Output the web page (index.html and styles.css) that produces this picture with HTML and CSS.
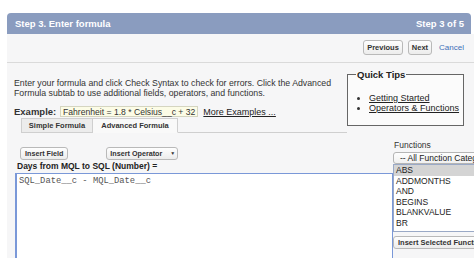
FILE: index.html
```html
<!DOCTYPE html>
<html>
<head>
<meta charset="utf-8">
<link rel="stylesheet" href="styles.css">
</head>
<body>
<div class="page">
  <div class="header">
    <span>Step 3. Enter formula</span>
    <span>Step 3 of 5</span>
  </div>
  <div class="panel">
    <div class="toolbar">
      <button class="btn">Previous</button>
      <button class="btn">Next</button>
      <a class="cancel" href="#">Cancel</a>
    </div>
    <div class="content">
      <div class="intro-row">
        <div class="intro">
          <p class="desc">Enter your formula and click Check Syntax to check for errors. Click the Advanced<br>Formula subtab to use additional fields, operators, and functions.</p>
          <div class="example">
            <span class="ex-label">Example:</span>
            <span class="ex-box">Fahrenheit = 1.8 * Celsius__c + 32</span>
            <a class="more" href="#">More Examples ...</a>
          </div>
          <div class="tabs">
            <span class="tab">Simple Formula</span>
            <span class="tab active">Advanced Formula</span>
            <span class="tab-fill"></span>
          </div>
        </div>
        <fieldset class="tips">
          <legend>Quick Tips</legend>
          <ul>
            <li><a href="#">Getting Started</a></li>
            <li><a href="#">Operators &amp; Functions</a></li>
          </ul>
        </fieldset>
      </div>
      <div class="editor-row">
        <div class="editor">
          <div class="editor-tools">
            <button class="btn">Insert Field</button>
            <button class="btn op">Insert Operator <span class="caret">&#9660;</span></button>
          </div>
          <div class="field-label">Days from MQL to SQL (Number) =</div>
          <div class="textarea">SQL_Date__c - MQL_Date__c</div>
        </div>
        <div class="functions">
          <div class="fn-label">Functions</div>
          <div class="fn-select">-- All Function Categories --</div>
          <ul class="fn-list">
            <li class="sel">ABS</li>
            <li>ADDMONTHS</li>
            <li>AND</li>
            <li>BEGINS</li>
            <li>BLANKVALUE</li>
            <li>BR</li>
          </ul>
          <button class="btn fn-btn">Insert Selected Function</button>
        </div>
      </div>
    </div>
  </div>
</div>
</body>
</html>
```
FILE: styles.css
```css
html, body {
  margin: 0;
  padding: 0;
  background: #fff;
  width: 474px;
  height: 258px;
  overflow: hidden;
  font-family: "Liberation Sans", Arial, sans-serif;
  color: #333;
}
.page {
  padding: 13px 0 0 7px;
}
.header {
  width: 464px;
  height: 21px;
  box-sizing: border-box;
  background: #8a9cbf;
  border-radius: 4px 4px 0 0;
  display: flex;
  justify-content: space-between;
  align-items: center;
  padding: 0 7px 0 8px;
  color: #fff;
  font-weight: bold;
  font-size: 9.5px;
}
.panel {
  width: 467px;
  background: #f6f6f7;
  height: 240px;
}
.toolbar {
  height: 29px;
  box-sizing: border-box;
  border-bottom: 1px solid #dadada;
  display: flex;
  align-items: center;
  justify-content: flex-end;
  padding: 0 10px 1px 0;
}
.btn {
  font-family: "Liberation Sans", Arial, sans-serif;
  font-weight: bold;
  font-size: 7.5px;
  color: #333;
  height: 15px;
  padding: 0 3px;
  border: 1px solid #b9b9b9;
  border-radius: 3px;
  background: linear-gradient(#fefefe, #ececec);
  line-height: 13px;
  margin: 0;
  white-space: nowrap;
}
.toolbar .btn + .btn {
  margin-left: 5px;
}
.cancel {
  margin-left: 7px;
  font-size: 8px;
  color: #3d6fb8;
  text-decoration: none;
}
.content {
  padding-left: 7px;
}
.intro-row {
  display: flex;
  align-items: flex-start;
}
.intro {
  width: 333px;
  padding-top: 15px;
}
.desc {
  margin: 0;
  font-size: 8.75px;
  line-height: 10px;
  color: #333;
  white-space: nowrap;
}
.example {
  display: flex;
  align-items: center;
  margin-top: 8px;
  height: 11px;
  white-space: nowrap;
}
.ex-label {
  font-weight: bold;
  font-size: 9.5px;
  width: 46px;
}
.ex-box {
  font-size: 8.6px;
  background: #fcfce6;
  border: 1px solid #d5d5c0;
  height: 11px;
  line-height: 10px;
  padding: 0 2px;
  box-sizing: border-box;
  margin-right: 5px;
}
.more {
  font-size: 9px;
  color: #222;
  text-decoration: underline;
}
.tabs {
  display: flex;
  margin-top: 1px;
  height: 15px;
  margin-left: 7px;
}
.tab {
  font-weight: bold;
  font-size: 7.5px;
  line-height: 13px;
  padding: 0 6px;
  border: 1px solid #cfcfcf;
  background: #ececec;
  color: #333;
  text-align: center;
}
.tab:first-child {
  width: 58px;
}
.tab.active {
  background: #f9f9f9;
  border-left: none;
  border-bottom-color: #f9f9f9;
  width: 72px;
}
.tab-fill {
  flex: 1;
  border-bottom: 1px solid #cfcfcf;
}
.tips {
  margin: 6px 0 0 0;
  padding: 4px 0 0 6px;
  width: 117px;
  height: 57px;
  box-sizing: border-box;
  border: 1px solid #666;
  background: #fbfbfb;
}
.tips legend {
  font-weight: bold;
  font-size: 9.5px;
  padding: 0 1px;
  margin-left: 2px;
  color: #222;
}
.tips ul {
  margin: 9px 0 0 0;
  padding-left: 15px;
  font-size: 9px;
  line-height: 10px;
}
.tips li {
  list-style: disc;
}
.tips a {
  color: #222;
  text-decoration: underline;
}
.editor-row {
  display: flex;
  align-items: flex-start;
}
.editor {
  width: 379px;
}
.editor-tools {
  display: flex;
  padding: 14px 0 0 6px;
}
.editor-tools .btn {
  height: 13px;
  line-height: 11px;
  font-size: 7.2px;
  padding: 0 4px;
}
.editor-tools .op {
  margin-left: 38px;
  width: 72px;
  padding: 0 3px;
}
.caret {
  font-size: 5px;
  margin-left: 6px;
  vertical-align: 1px;
}
.field-label {
  font-weight: bold;
  font-size: 8.5px;
  margin: 1px 0 0 3px;
  line-height: 10px;
  color: #222;
}
.textarea {
  margin: 2px 0 0 1px;
  width: 378px;
  height: 100px;
  box-sizing: border-box;
  border: 1px solid #7a98d8;
  border-left-width: 2px;
  background: #fff;
  font-family: "Liberation Mono", "Courier New", monospace;
  font-size: 8.8px;
  color: #555;
  padding: 2px 2px;
  line-height: 10px;
}
.functions {
  width: 100px;
  flex: none;
  font-size: 8.5px;
}
.fn-label {
  margin-top: 7px;
  padding-left: 1px;
  line-height: 10px;
  color: #333;
}
.fn-select {
  margin-top: 2px;
  height: 12px;
  box-sizing: border-box;
  border: 1px solid #b5b5b5;
  border-radius: 3px;
  background: linear-gradient(#fefefe, #f0f0f0);
  font-size: 8.5px;
  line-height: 10px;
  padding-left: 6px;
  white-space: nowrap;
  overflow: hidden;
  color: #222;
}
.fn-list {
  margin: 0;
  padding: 0;
  list-style: none;
  border: 1px solid #9aa9c6;
  border-right: none;
  background: #fff;
  height: 68px;
  box-sizing: border-box;
  font-size: 8.5px;
  color: #222;
}
.fn-list li {
  line-height: 10.5px;
  padding-left: 2px;
}
.fn-list li.sel {
  background: #d4d4d4;
}
.fn-btn {
  margin-top: 4px;
  width: 110px;
  text-align: left;
  height: 13px;
  line-height: 11px;
  font-size: 7.5px;
  padding-left: 4px;
}
```
